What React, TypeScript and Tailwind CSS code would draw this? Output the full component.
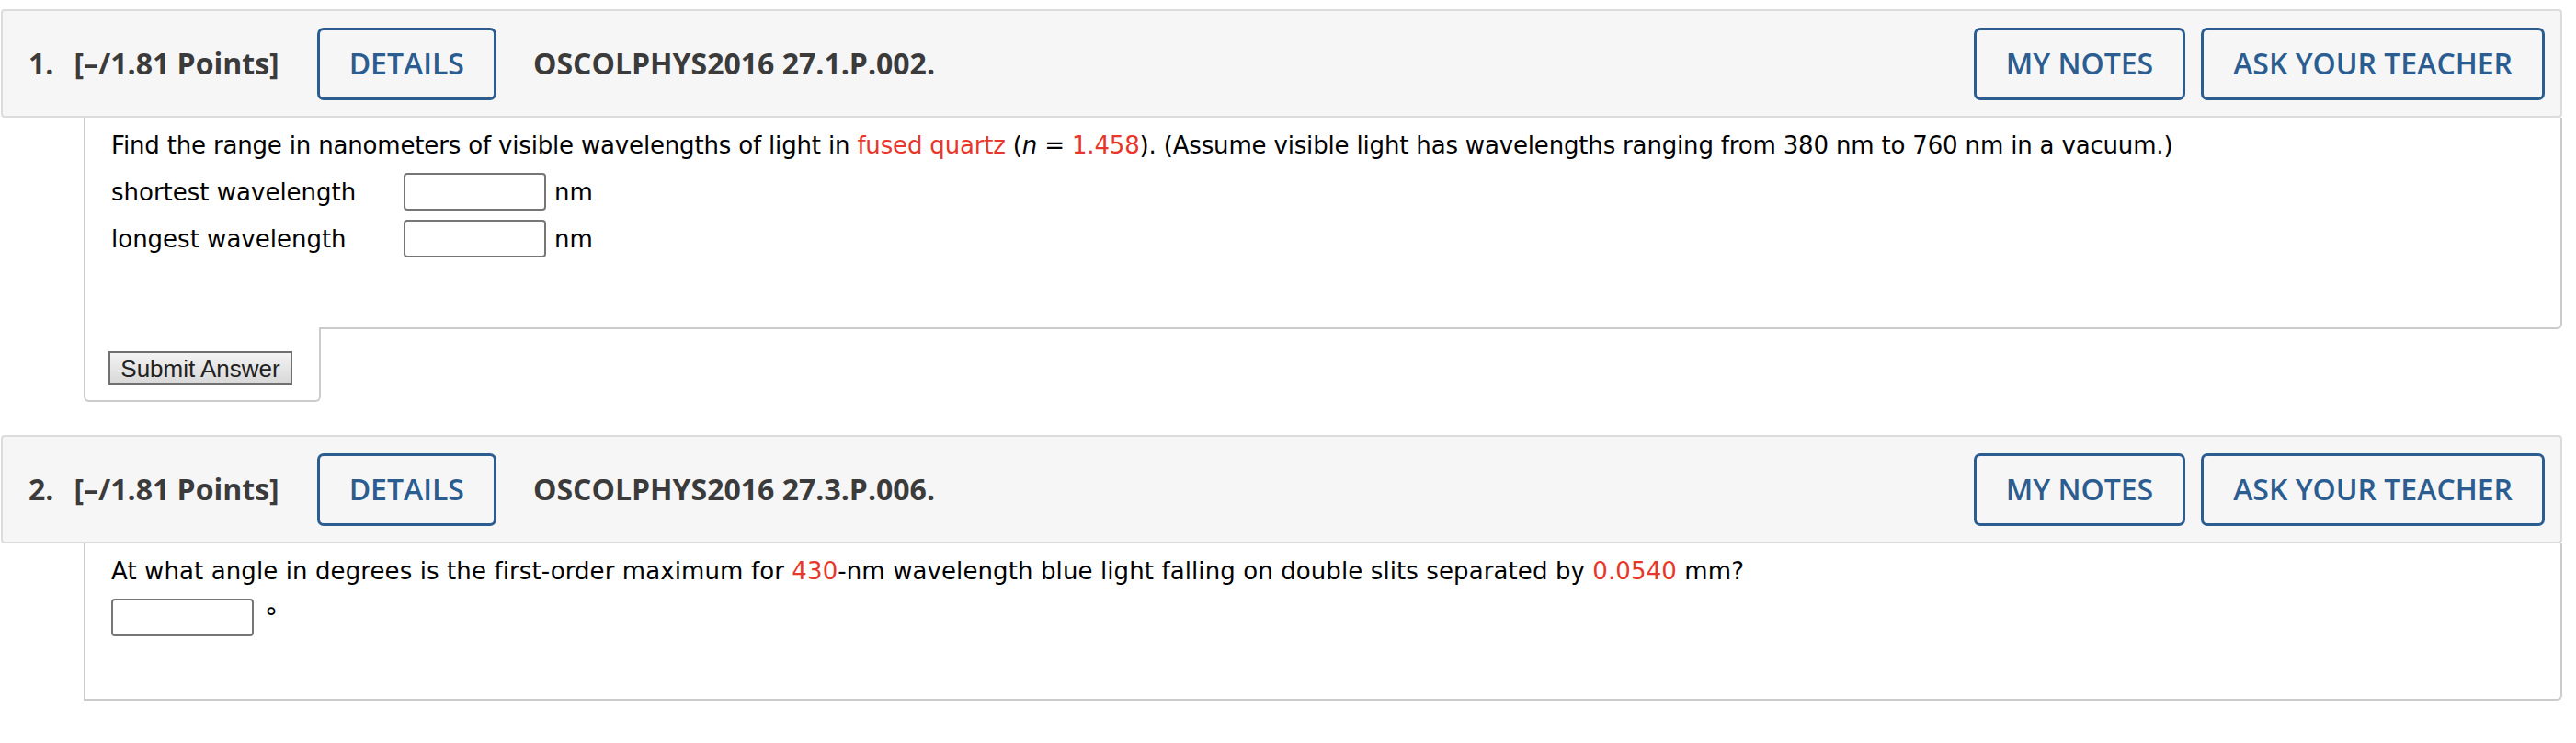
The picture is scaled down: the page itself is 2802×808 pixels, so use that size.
import React from "react";

const RED = "text-[#e8372a]";

function HeaderButton({ children }: { children: React.ReactNode }) {
  return (
    <button
      type="button"
      className="h-[79px] px-[32px] border-[3px] border-[#2b5d90] rounded-[7px] bg-transparent text-[#2b5d90] font-['Open_Sans',sans-serif] font-semibold text-[32px] leading-none whitespace-nowrap"
    >
      {children}
    </button>
  );
}

function QuestionHeader({ num, code }: { num: string; code: string }) {
  return (
    <div className="flex items-center h-[118px] border-2 border-[#dcdcdc] bg-[#f6f6f6] rounded-[4px] pl-[28px] pr-[17px] font-['Open_Sans',sans-serif] text-[#3b3b3b]">
      <span className="font-bold text-[32px] leading-none">{num}</span>
      <span className="ml-[22px] font-bold text-[32px] leading-none">[–/1.81 Points]</span>
      <div className="ml-[41px]">
        <HeaderButton>DETAILS</HeaderButton>
      </div>
      <span className="ml-[40px] font-bold text-[32px] leading-none">{code}</span>
      <div className="ml-auto flex items-center gap-[17px]">
        <HeaderButton>MY NOTES</HeaderButton>
        <HeaderButton>ASK YOUR TEACHER</HeaderButton>
      </div>
    </div>
  );
}

function AnswerBox() {
  return (
    <input
      type="text"
      className="w-[155px] h-[41px] border-2 border-[#767676] rounded-[4px] bg-white outline-none"
    />
  );
}

export default function App() {
  return (
    <div className="min-h-screen bg-white pt-[10px] pl-[1px] pr-[15px] font-['DejaVu_Sans',Verdana,sans-serif] text-black">
      {/* Question 1 */}
      <section>
        <QuestionHeader num="1." code="OSCOLPHYS2016 27.1.P.002." />
        <div className="ml-[90px] border-x-2 border-b-2 border-[#cbcbcb] rounded-br-[6px] pl-[28px] pt-[15px] pb-[76px] text-[26px] leading-[30px]">
          <p className="tracking-[-0.17px]">
            Find the range in nanometers of visible wavelengths of light in{" "}
            <span className={RED}>fused quartz</span> (<i>n</i> ={" "}
            <span className={RED}>1.458</span>). (Assume visible light has wavelengths
            ranging from 380 nm to 760 nm in a vacuum.)
          </p>
          <div className="mt-[15px] flex flex-col gap-[10px]">
            <div className="flex items-center">
              <span className="w-[318px]">shortest wavelength</span>
              <AnswerBox />
              <span className="ml-[9px]">nm</span>
            </div>
            <div className="flex items-center">
              <span className="w-[318px]">longest wavelength</span>
              <AnswerBox />
              <span className="ml-[9px]">nm</span>
            </div>
          </div>
        </div>
        <div className="relative ml-[90px] -mt-[2px] w-[258px] bg-white border-x-2 border-b-2 border-[#cbcbcb] rounded-b-[6px] pl-[25px] pt-[26px] pb-[16px]">
          <button
            type="button"
            className="w-[200px] h-[37px] border-2 border-[#707070] bg-linear-to-b from-[#f3f3f3] to-[#d8d8d8] font-['Liberation_Sans',Arial,sans-serif] text-[26px] leading-none text-[#222]"
          >
            Submit Answer
          </button>
        </div>
      </section>

      <div className="h-[36px]" />

      {/* Question 2 */}
      <section>
        <QuestionHeader num="2." code="OSCOLPHYS2016 27.3.P.006." />
        <div className="ml-[90px] border-x-2 border-b-2 border-[#cbcbcb] rounded-br-[6px] pl-[28px] pt-[15px] pb-[68px] text-[26px] leading-[30px]">
          <p className="tracking-[0.1px]">
            At what angle in degrees is the first-order maximum for{" "}
            <span className={RED}>430</span>-nm wavelength blue light falling on double
            slits separated by <span className={RED}>0.0540</span> mm?
          </p>
          <div className="mt-[15px] flex items-center">
            <AnswerBox />
            <span className="ml-[12px] text-[28px]">°</span>
          </div>
        </div>
      </section>
    </div>
  );
}
